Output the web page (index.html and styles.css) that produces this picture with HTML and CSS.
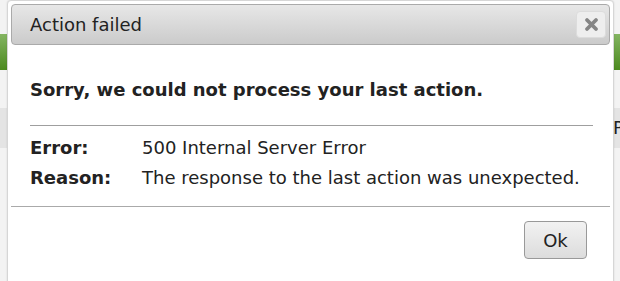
FILE: index.html
```html
<!DOCTYPE html>
<html lang="en">
<head>
  <meta charset="utf-8" />
  <title>Action failed</title>
  <link rel="stylesheet" href="styles.css">
</head>
<body>
<div class="app">
  <div class="app-header"></div>
  <div class="app-row"><span class="app-row--text">P</span></div>
</div>

<div class="dlg" role="dialog" aria-labelledby="dlg-title">
  <div class="dlg-titlebar">
    <span id="dlg-title" class="dlg-title">Action failed</span>
    <button class="dlg-close" type="button" aria-label="Close">
      <svg width="15" height="15" viewBox="0 0 15 15">
        <path d="M3 3 L12 12 M12 3 L3 12" stroke="#858585" stroke-width="3.8" stroke-linecap="round" fill="none" />
      </svg>
    </button>
  </div>
  <div class="dlg-content">
    <p class="dlg-lead">Sorry, we could not process your last action.</p>
    <hr class="dlg-rule" />
    <table class="dlg-info">
      <tr>
        <th>Error:</th>
        <td>500 Internal Server Error</td>
      </tr>
      <tr>
        <th>Reason:</th>
        <td>The response to the last action was unexpected.</td>
      </tr>
    </table>
  </div>
  <div class="dlg-buttons">
    <button class="dlg-button" type="button">Ok</button>
  </div>
</div>
</body>
</html>
```

FILE: styles.css
```css
:root {
  --tausta: #f3f3f3;
  --teksti: #222;
  --viiva: #aaa;
}
html, body {
  height: 100%;
}
body {
  margin: 0;
  padding: 0;
  background-color: var(--tausta);
  font-family: "DejaVu Sans", Verdana, sans-serif;
  font-size: 18px;
  color: var(--teksti);
  overflow: hidden;
}
.app {
  padding-top: 34px;
}
.app-header {
  height: 36px;
  background: linear-gradient(#84b562, #4c8a1f);
}
.app-row {
  margin-top: 38px;
  height: 40px;
  background-color: #e4e4e4;
  padding-left: 613px;
  line-height: 40px;
  white-space: nowrap;
  overflow: hidden;
}
.app-row--text {
  font-size: 18px;
}

.dlg {
  position: absolute;
  left: 7px;
  top: 0;
  width: 599px;
  height: 285px;
  padding: 3px;
  background-color: #fff;
  border: 1px solid #d6d6d6;
  border-radius: 4px;
  box-shadow: 0 0 2px rgba(0, 0, 0, 0.12);
}
.dlg-titlebar {
  position: relative;
  padding: 10px 18px;
  line-height: 19px;
  border: 1px solid #aaa;
  border-radius: 4px;
  background: linear-gradient(#e7e7e7, #cbcbcb);
}
.dlg-title {
  color: var(--teksti);
}
.dlg-close {
  position: absolute;
  right: 3px;
  top: 6px;
  width: 30px;
  height: 27px;
  padding: 0;
  border: 1px solid #dcdcdc;
  border-radius: 4px;
  background-color: #eee;
  display: flex;
  align-items: center;
  justify-content: center;
}
.dlg-content {
  padding: 0 17px 0 19px;
}
.dlg-lead {
  margin: 35px 0 0;
  line-height: 20px;
  font-weight: bold;
}
.dlg-rule {
  margin: 25px 0 7px;
  border: 0;
  border-top: 1px solid #9f9f9f;
  height: 0;
}
.dlg-info {
  border-collapse: collapse;
}
.dlg-info th {
  width: 112px;
  padding: 0;
  text-align: left;
  font-weight: bold;
  height: 30px;
  line-height: 20px;
}
.dlg-info td {
  padding: 0;
  height: 30px;
  line-height: 20px;
}
.dlg-buttons {
  margin-top: 13px;
  border-top: 1px solid #aaa;
  padding: 14px 23px 0 0;
  display: flex;
  justify-content: flex-end;
}
.dlg-button {
  width: 63px;
  height: 38px;
  font-family: inherit;
  font-size: 18px;
  color: var(--teksti);
  border: 1px solid #999;
  border-radius: 4px;
  background: linear-gradient(#f2f2f2, #dcdcdc);
  padding: 0;
}
```
